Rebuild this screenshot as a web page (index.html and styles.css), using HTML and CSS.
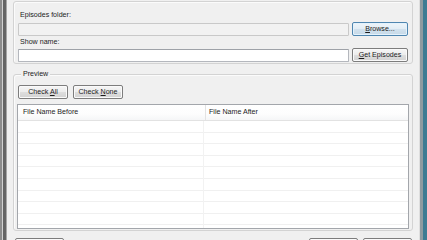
FILE: index.html
```html
<!DOCTYPE html>
<html>
<head>
<meta charset="utf-8">
<link rel="stylesheet" href="styles.css">
</head>
<body>
<div class="window">
  <div class="frame-left"></div>
  <div class="form">
    <div class="group group-source">
      <div class="field-label">Episodes folder:</div>
      <div class="field-row">
        <div class="textbox textbox-disabled"></div>
        <button class="btn btn-default"><u>B</u>rowse...</button>
      </div>
      <div class="field-label field-label-2">Show name:</div>
      <div class="field-row field-row-2">
        <div class="textbox"></div>
        <button class="btn"><u>G</u>et Episodes</button>
      </div>
    </div>
    <div class="group group-preview">
      <div class="group-title">Preview</div>
      <div class="check-row">
        <button class="btn btn-check">Check <u>A</u>ll</button>
        <button class="btn btn-check">Check <u>N</u>one</button>
      </div>
      <div class="listview">
        <div class="list-header">
          <div class="col col-before">File Name Before</div>
          <div class="col col-after">File Name After</div>
        </div>
        <div class="list-body">
          <div class="body-col body-col-before"></div>
          <div class="body-col body-col-after"></div>
        </div>
      </div>
    </div>
    <div class="footer">
      <button class="btn btn-footer"></button>
      <div class="footer-spacer"></div>
      <button class="btn btn-footer"></button>
      <button class="btn btn-footer"></button>
    </div>
  </div>
  <div class="frame-right"></div>
</div>
</body>
</html>
```

FILE: styles.css
```css
* { box-sizing: border-box; }
html, body {
  margin: 0;
  padding: 0;
  width: 427px;
  height: 240px;
  overflow: hidden;
  background: #f0f0f0;
}
body {
  font-family: "Liberation Sans", Arial, sans-serif;
  font-size: 7.1px;
  color: #1c1c1c;
}
.window {
  display: flex;
  width: 427px;
  height: 240px;
}
.frame-left {
  width: 7px;
  flex: none;
  background: linear-gradient(to right,
    #8c8c8c 0 2px, #d2d2d2 2px 3px, #656565 3px 6px, #a6a6a6 6px 7px);
}
.frame-right {
  width: 8px;
  flex: none;
  background: linear-gradient(to right,
    #dedede 0 1px, #8e9aa0 1px 4px, #3d7b93 4px 8px);
}
.form {
  flex: 1;
  background: #f0f0f0;
  display: flex;
  flex-direction: column;
  overflow: hidden;
}
.group {
  margin: 0 6px;
  border: 1px solid #d3d3d3;
  border-radius: 3px;
  box-shadow: inset 1px 1px 0 #fbfbfb;
  flex: none;
}
.group-source {
  margin-top: 1px;
  height: 63px;
  padding: 9px 4px 1px 4px;
}
.field-label {
  height: 9px;
  line-height: 9px;
  padding-left: 2px;
  white-space: nowrap;
}
.field-label-2 { margin-top: 2px; }
.field-row {
  display: flex;
  align-items: center;
  gap: 3px;
  height: 14px;
  margin-top: 2px;
}
.field-row-2 { margin-top: 1px; }
.textbox {
  flex: 1;
  height: 13px;
  background: #ffffff;
  border: 1px solid #b4b7bd;
  border-top-color: #9ea2a8;
  border-radius: 1px;
}
.textbox-disabled {
  background: #f2f2f2;
  border-color: #c9c9c9;
}
.btn {
  font-family: inherit;
  font-size: 7.1px;
  color: #1c1c1c;
  margin: 0;
  padding: 0;
  height: 14px;
  line-height: 12px;
  border: 1px solid #7d7d7d;
  border-radius: 2px;
  background: linear-gradient(to bottom, #f6f6f6 0%, #ececec 50%, #dedede 50%, #d2d2d2 100%);
  box-shadow: inset 0 0 0 1px #fafafa;
  text-align: center;
  white-space: nowrap;
  flex: none;
}
.field-row .btn { width: 56px; }
.btn-default {
  border-color: #4f86b0;
  background: linear-gradient(to bottom, #eef5fa 0%, #e2edf5 50%, #d2e2ee 50%, #c6d9e7 100%);
  box-shadow: inset 0 0 0 1px #e4f2fc;
}
.group-preview {
  margin-top: 10px;
  height: 157px;
  padding: 0 3px 1px 3px;
}
.group-title {
  display: block;
  width: max-content;
  margin: -5px 0 0 4px;
  padding: 0 2px;
  height: 9px;
  line-height: 9px;
  background: #f0f0f0;
}
.check-row {
  display: flex;
  gap: 5px;
  margin: 6px 0 0 1px;
}
.btn-check { width: 50px; }
.listview {
  margin-top: 5px;
  height: 125px;
  border: 1px solid #a3a6ab;
  background: #ffffff;
  display: flex;
  flex-direction: column;
}
.list-header {
  display: flex;
  height: 16px;
  border-bottom: 1px solid #e2e2e2;
  background: linear-gradient(to bottom, #ffffff 0%, #fdfdfd 60%, #f5f6f7 100%);
  flex: none;
}
.col {
  line-height: 15px;
  white-space: nowrap;
}
.col-before {
  width: 188px;
  padding-left: 5px;
  border-right: 1px solid #e3e3e3;
}
.col-after {
  flex: 1;
  padding-left: 3px;
}
.list-body {
  flex: 1;
  display: flex;
  background: repeating-linear-gradient(to bottom, transparent 0 10.6px, #f0f0f0 10.6px 11.6px);
}
.body-col-before {
  width: 186px;
  border-right: 1px solid #f2f2f2;
}
.body-col-after { flex: 1; }
.footer {
  display: flex;
  gap: 5px;
  margin: 7px 7px 0 8px;
  flex: none;
}
.footer-spacer { flex: 1; }
.btn-footer { width: 49px; height: 14px; }
```
